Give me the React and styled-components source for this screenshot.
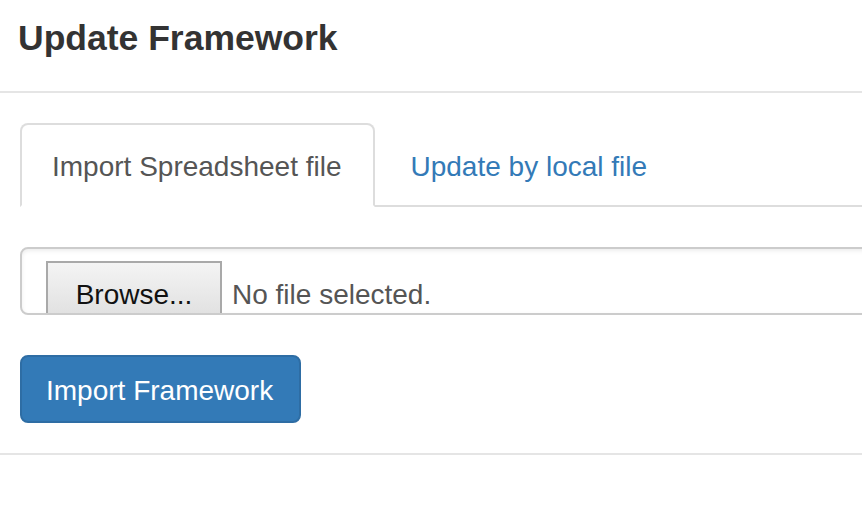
import React from "react";
import styled, { createGlobalStyle } from "styled-components";

const GlobalStyle = createGlobalStyle`
  html, body {
    margin: 0;
    padding: 0;
    background: #fff;
    overflow: hidden;
  }
  body {
    font-family: "Liberation Sans", Arial, Helvetica, sans-serif;
    color: #333;
  }
`;

const Modal = styled.div`
  width: 1100px;
  background: #fff;
`;

const Header = styled.div`
  padding: 18px 20px 33px 18px;
  border-bottom: 2px solid #e5e5e5;
`;

const Title = styled.h4`
  margin: 0;
  font-size: 35.5px;
  font-weight: 700;
  line-height: 40px;
  color: #333;
`;

const Body = styled.div`
  padding: 30px 20px;
`;

const Tabs = styled.ul`
  display: flex;
  margin: 0;
  padding: 0;
  list-style: none;
  border-bottom: 2px solid #ddd;
`;

const Tab = styled.li`
  margin-right: 4px;
  margin-bottom: -2px;
`;

const TabLink = styled.a`
  display: block;
  padding: 22px 31px 18px 30px;
  font-size: 28px;
  line-height: 40px;
  text-decoration: none;
  border: 2px solid transparent;
  border-radius: 8px 8px 0 0;
  color: ${(p) => (p.$active ? "#555" : "#337ab7")};
  background: ${(p) => (p.$active ? "#fff" : "transparent")};
  border-color: ${(p) => (p.$active ? "#ddd #ddd transparent" : "transparent")};
  cursor: ${(p) => (p.$active ? "default" : "pointer")};
`;

const TabContent = styled.div`
  padding-top: 40px;
`;

const FileBox = styled.div`
  display: flex;
  align-items: flex-start;
  box-sizing: border-box;
  height: 68px;
  padding: 12px 24px 0;
  border: 2px solid #ccc;
  border-radius: 8px;
  box-shadow: inset 0 2px 4px rgba(0, 0, 0, 0.075);
  overflow: hidden;
  margin-bottom: 40px;
`;

const BrowseButton = styled.span`
  flex: none;
  width: 176px;
  height: 64px;
  box-sizing: border-box;
  padding-top: 16px;
  text-align: center;
  border: 2px solid #a9a9a9;
  background: linear-gradient(#f4f4f4, #dedede);
  font-size: 28px;
  line-height: 32px;
  color: #111;
`;

const FileName = styled.span`
  margin-left: 10px;
  padding-top: 18px;
  font-size: 28px;
  line-height: 32px;
  color: #555;
`;

const PrimaryButton = styled.button`
  display: inline-block;
  padding: 14px 26px 10px 24px;
  font-family: inherit;
  font-size: 28px;
  line-height: 40px;
  color: #fff;
  background: #337ab7;
  border: 2px solid #2e6da4;
  border-radius: 8px;
  cursor: pointer;
`;

const Footer = styled.div`
  border-top: 2px solid #e5e5e5;
  height: 60px;
`;

export default function App() {
  return (
    <>
      <GlobalStyle />
      <Modal>
        <Header>
          <Title>Update Framework</Title>
        </Header>
        <Body>
          <Tabs>
            <Tab>
              <TabLink $active>Import Spreadsheet file</TabLink>
            </Tab>
            <Tab>
              <TabLink href="#local">Update by local file</TabLink>
            </Tab>
          </Tabs>
          <TabContent>
            <FileBox>
              <BrowseButton>Browse...</BrowseButton>
              <FileName>No file selected.</FileName>
            </FileBox>
            <PrimaryButton type="button">Import Framework</PrimaryButton>
          </TabContent>
        </Body>
        <Footer />
      </Modal>
    </>
  );
}
